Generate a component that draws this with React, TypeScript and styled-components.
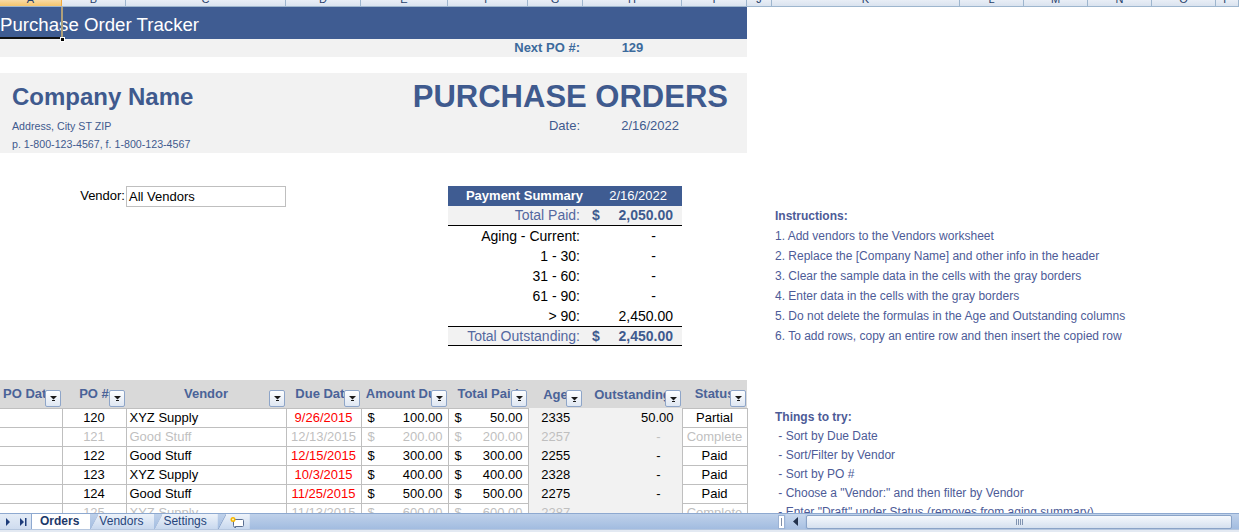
import React from "react";
import styled, { createGlobalStyle } from "styled-components";

const BLUE = "#3F5C92";
const HEADING = "#3F5A8E";
const NOTE = "#4D5B97";
const PANEL = "#F2F2F2";
const GRID = "#BFBFBF";
const MUTED = "#BFBFBF";

const COLS = [62, 64, 160, 75, 87, 80, 55, 99, 65];
const gridCols = COLS.map((c) => `${c}px`).join(" ");

const HEADER_COLS: [string, number][] = [
  ["A", 62], ["B", 64], ["C", 160], ["D", 75], ["E", 87], ["F", 80], ["G", 55], ["H", 99],
  ["I", 65], ["J", 25], ["K", 188], ["L", 64], ["M", 64], ["N", 64], ["O", 64], ["P", 64],
];

type Order = {
  po: number;
  vendor: string;
  due: string;
  amount: string;
  paid: string;
  age: number;
  out: string;
  status: string;
  muted?: boolean;
};

const orders: Order[] = [
  { po: 120, vendor: "XYZ Supply", due: "9/26/2015", amount: "100.00", paid: "50.00", age: 2335, out: "50.00", status: "Partial" },
  { po: 121, vendor: "Good Stuff", due: "12/13/2015", amount: "200.00", paid: "200.00", age: 2257, out: "-", status: "Complete", muted: true },
  { po: 122, vendor: "Good Stuff", due: "12/15/2015", amount: "300.00", paid: "300.00", age: 2255, out: "-", status: "Paid" },
  { po: 123, vendor: "XYZ Supply", due: "10/3/2015", amount: "400.00", paid: "400.00", age: 2328, out: "-", status: "Paid" },
  { po: 124, vendor: "Good Stuff", due: "11/25/2015", amount: "500.00", paid: "500.00", age: 2275, out: "-", status: "Paid" },
  { po: 125, vendor: "XYZ Supply", due: "11/13/2015", amount: "600.00", paid: "600.00", age: 2287, out: "-", status: "Complete", muted: true },
];

const aging: [string, string][] = [
  ["Aging - Current:", "-"],
  ["1 - 30:", "-"],
  ["31 - 60:", "-"],
  ["61 - 90:", "-"],
  ["> 90:", "2,450.00"],
];

const instructions = [
  "1. Add vendors to the Vendors worksheet",
  "2. Replace the [Company Name] and other info in the header",
  "3. Clear the sample data in the cells with the gray borders",
  "4. Enter data in the cells with the gray borders",
  "5. Do not delete the formulas in the Age and Outstanding columns",
  "6. To add rows, copy an entire row and then insert the copied row",
];

const thingsToTry = [
  " - Sort by Due Date",
  " - Sort/Filter by Vendor",
  " - Sort by PO #",
  ' - Choose a "Vendor:" and then filter by Vendor',
  ' - Enter "Draft" under Status (removes from aging summary)',
];

const tableHeads = ["PO Date", "PO #", "Vendor", "Due Date", "Amount Due", "Total Paid", "Age", "Outstanding", "Status"];

const GlobalStyle = createGlobalStyle`
  * { box-sizing: border-box; }
  html, body { margin: 0; padding: 0; overflow: hidden; background: #fff; }
  body { font-family: "Liberation Sans", Arial, sans-serif; color: #000; }
`;

const Window = styled.div`
  width: 1239px;
  height: 532px;
  display: flex;
  flex-direction: column;
  overflow: hidden;
`;

const ColumnHeaders = styled.div`
  display: flex;
  height: 7px;
  flex: none;
  border-bottom: 1px solid #9eb6ce;
  background: linear-gradient(#e9eef6, #dae3ef);
`;

const ColHead = styled.div<{ $w: number; $active?: boolean }>`
  width: ${(p) => p.$w}px;
  flex: none;
  overflow: hidden;
  border-right: 1px solid ${(p) => (p.$active ? "#f2a93b" : "#9eb6ce")};
  background: ${(p) => (p.$active ? "linear-gradient(#f9dba5, #f6c56c)" : "transparent")};
  text-align: center;
  font-size: 11px;
  color: #27416b;

  span {
    display: block;
    margin-top: -8px;
    line-height: 14px;
  }

  &:last-child {
    flex: 1;
  }
`;

const Sheet = styled.div`
  flex: 1;
  display: flex;
  overflow: hidden;
`;

const LeftPane = styled.div`
  width: 747px;
  flex: none;
  display: flex;
  flex-direction: column;
`;

const RightPane = styled.div`
  flex: 1;
  display: flex;
  flex-direction: column;
  padding-left: 28px;
`;

const Spacer = styled.div<{ $h: number }>`
  height: ${(p) => p.$h}px;
  flex: none;
`;

const TitleBar = styled.div`
  position: relative;
  height: 32px;
  flex: none;
  background: ${BLUE};
  color: #fff;
  font-size: 18.67px;
  line-height: 29px;
  padding-top: 3px;
  white-space: nowrap;
`;

const Selection = styled.div`
  position: absolute;
  left: 0;
  top: 0;
  width: 63px;
  height: 32px;
  border-right: 2px solid #b0a07a;
  border-bottom: 2px solid #111;
  pointer-events: none;
`;

const FillHandle = styled.div`
  position: absolute;
  left: 60px;
  top: 30px;
  width: 5px;
  height: 5px;
  background: #000;
  border: 1px solid #fff;
`;

const NextPoRow = styled.div`
  height: 18px;
  flex: none;
  display: grid;
  grid-template-columns: ${gridCols};
  background: ${PANEL};
  font-size: 13px;
  font-weight: bold;
  line-height: 18px;
  color: #3c6a9c;
`;

const NextPoLabel = styled.div`
  grid-column: 5 / 8;
  text-align: right;
  padding-right: 3px;
`;

const NextPoValue = styled.div`
  grid-column: 8;
  text-align: center;
`;

const CompanyBlock = styled.div`
  height: 80px;
  flex: none;
  display: grid;
  grid-template-columns: ${gridCols};
  grid-template-rows: 44px 18px 18px;
  background: ${PANEL};
  color: ${HEADING};
`;

const CompanyName = styled.div`
  grid-column: 1 / 5;
  grid-row: 1;
  padding: 10px 0 0 12px;
  font-size: 24px;
  line-height: 28px;
  font-weight: bold;
  white-space: nowrap;
`;

const DocTitle = styled.div`
  grid-column: 5 / 10;
  grid-row: 1;
  padding: 6px 19px 0 0;
  text-align: right;
  font-size: 31px;
  line-height: 36px;
  font-weight: bold;
  white-space: nowrap;
`;

const SmallLine = styled.div<{ $row: number }>`
  grid-column: 1 / 5;
  grid-row: ${(p) => p.$row};
  padding-left: 12px;
  font-size: 10.67px;
  line-height: 18px;
  white-space: nowrap;
`;

const DateLabel = styled.div`
  grid-column: 5 / 8;
  grid-row: 2;
  text-align: right;
  padding-right: 3px;
  font-size: 13px;
  line-height: 18px;
`;

const DateValue = styled.div`
  grid-column: 8;
  grid-row: 2;
  text-align: right;
  padding-right: 3px;
  font-size: 13px;
  line-height: 18px;
`;

const SummaryArea = styled.div`
  flex: none;
  display: grid;
  grid-template-columns: ${gridCols};
  grid-template-rows: repeat(8, 20px);
`;

const VendorLabel = styled.div`
  grid-column: 2;
  grid-row: 1;
  text-align: right;
  padding-right: 1px;
  font-size: 13px;
  line-height: 20px;
`;

const VendorBox = styled.div`
  grid-column: 3;
  grid-row: 1;
  height: 21px;
  border: 1px solid ${GRID};
  padding-left: 2px;
  font-size: 13px;
  line-height: 19px;
`;

const PaymentSummary = styled.div`
  grid-column: 6 / 9;
  grid-row: 1 / 9;
  display: flex;
  flex-direction: column;
`;

type RowKind = "head" | "total" | "plain" | "last";

const SummaryRow = styled.div<{ $kind: RowKind }>`
  height: 20px;
  display: grid;
  grid-template-columns: 135px 99px;
  font-size: ${(p) => (p.$kind === "head" ? "13px" : "14px")};
  line-height: ${(p) => (p.$kind === "last" ? "18px" : p.$kind === "total" ? "19px" : "20px")};
  background: ${(p) => (p.$kind === "head" ? BLUE : p.$kind === "plain" ? "transparent" : PANEL)};
  color: ${(p) => (p.$kind === "head" ? "#fff" : p.$kind === "plain" ? "#000" : "#5468a0")};
  border-top: ${(p) => (p.$kind === "last" ? "1px solid #000" : "none")};
  border-bottom: ${(p) => (p.$kind === "total" || p.$kind === "last" ? "1px solid #000" : "none")};
`;

const SummaryLabel = styled.div<{ $bold?: boolean }>`
  text-align: right;
  padding-right: ${(p) => (p.$bold ? "0" : "3px")};
  font-weight: ${(p) => (p.$bold ? "bold" : "normal")};
  white-space: nowrap;
`;

const SummaryValue = styled.div<{ $bold?: boolean; $pad?: number }>`
  display: flex;
  justify-content: space-between;
  padding: 0 ${(p) => p.$pad ?? 9}px 0 9px;
  font-weight: ${(p) => (p.$bold ? "bold" : "normal")};
  color: ${(p) => (p.$bold ? HEADING : "inherit")};
`;

const Dash = styled.span<{ $gap: number }>`
  margin-right: ${(p) => p.$gap}px;
`;

const Table = styled.table`
  border-collapse: collapse;
  table-layout: fixed;
  width: 747px;
  flex: none;
  font-size: 13px;
`;

const HeadCell = styled.th`
  position: relative;
  height: 28px;
  padding: 0 2px;
  background: #d9d9d9;
  color: #4a6398;
  font-size: 13px;
  font-weight: bold;
  text-align: center;
  white-space: nowrap;
  overflow: hidden;

  &:first-child {
    text-align: left;
    padding-left: 3px;
  }
`;

const FilterButton = styled.span`
  position: absolute;
  right: 1px;
  bottom: 1px;
  width: 16px;
  height: 17px;
  border: 1px solid #8ea5c8;
  border-radius: 2px;
  background: linear-gradient(#fdfeff, #dfe7f2);
  display: flex;
  align-items: center;
  justify-content: center;
`;

type Align = "left" | "center" | "right";

const Cell = styled.td<{ $align?: Align; $muted?: boolean; $red?: boolean; $shade?: "age" | "out" }>`
  height: 19px;
  padding: 0 ${(p) => (p.$align === "left" ? "3px" : "0")};
  border: 1px solid ${GRID};
  text-align: ${(p) => p.$align ?? "center"};
  white-space: nowrap;
  overflow: hidden;
  line-height: 17px;
  color: ${(p) => (p.$muted ? MUTED : p.$red ? "#ff0000" : "#000")};
  background: ${(p) => (p.$shade ? PANEL : "#fff")};
  border-top-style: ${(p) => (p.$shade ? "none" : "solid")};
  border-bottom-style: ${(p) => (p.$shade ? "none" : "solid")};
  border-right-style: ${(p) => (p.$shade === "age" ? "none" : "solid")};
  border-left-style: ${(p) => (p.$shade === "out" ? "none" : "solid")};

  &:first-child {
    border-left-style: none;
  }
`;

const Money = styled.div`
  display: flex;
  justify-content: space-between;
  padding: 0 5px 0 6px;
`;

const OutValue = styled.div`
  text-align: right;
  padding-right: 8px;
`;

const NoteHeading = styled.div<{ $h: number }>`
  height: ${(p) => p.$h}px;
  line-height: ${(p) => p.$h}px;
  font-size: 12px;
  font-weight: bold;
  color: ${NOTE};
  flex: none;
`;

const NoteLine = styled.div<{ $h: number }>`
  height: ${(p) => p.$h}px;
  line-height: ${(p) => p.$h}px;
  font-size: 12px;
  color: ${NOTE};
  white-space: pre;
  flex: none;
`;

const TabBar = styled.div`
  height: 16px;
  flex: none;
  display: flex;
  background: linear-gradient(#bfd1ea, #a2bce0);
  border-top: 1px solid #8ea9d0;
`;

const NavButtons = styled.div`
  width: 32px;
  flex: none;
  display: flex;
  align-items: center;
  gap: 8px;
  padding-left: 5px;
  background: linear-gradient(#e4ecf7, #cfdcef);
  border-right: 1px solid #8ea9d0;
`;

const Tabs = styled.div`
  display: flex;
`;

const Tab = styled.div<{ $active?: boolean }>`
  position: relative;
  height: 15px;
  padding: 0 11px 0 ${(p) => (p.$active ? "8px" : "9px")};
  font-size: 12px;
  line-height: 15px;
  font-weight: ${(p) => (p.$active ? "bold" : "normal")};
  color: ${(p) => (p.$active ? "#1d3869" : "#27457c")};
  background: ${(p) => (p.$active ? "#fff" : "linear-gradient(#eef3fa, #c8d8ee)")};
  clip-path: ${(p) => (p.$active ? "none" : "polygon(8px 0, 100% 0, 100% 100%, 0 100%)")};
  white-space: nowrap;

  &::before {
    content: "";
    position: absolute;
    left: 0;
    top: 0;
    width: 8px;
    height: 15px;
    display: ${(p) => (p.$active ? "none" : "block")};
    background: linear-gradient(to bottom right, transparent calc(50% - 1px), #7d99c4 50%, transparent calc(50% + 1px));
  }
`;

const NewSheetTab = styled(Tab)`
  width: 32px;
  padding: 0 0 0 6px;
  display: flex;
  align-items: center;
  justify-content: center;
`;

const BarFill = styled.div`
  flex: 1;
`;

const Scrollbar = styled.div`
  width: 461px;
  flex: none;
  display: flex;
  align-items: center;
  gap: 1px;
`;

const Splitter = styled.div`
  width: 7px;
  height: 14px;
  background: #fff;
  border: 1px solid #9bb2d4;
  display: flex;
  align-items: center;
  justify-content: center;

  &::after {
    content: "";
    width: 1px;
    height: 8px;
    background: #7f8ea8;
  }
`;

const ArrowButton = styled.div`
  width: 19px;
  height: 15px;
  display: flex;
  align-items: center;
  justify-content: center;
  background: linear-gradient(#c8d8ee, #a9c1e2);
`;

const Thumb = styled.div`
  width: 426px;
  height: 14px;
  border: 1px solid #8aa3c7;
  border-radius: 2px;
  background: linear-gradient(#f6f9fd, #d5e0ef);
  display: flex;
  align-items: center;
  justify-content: center;
  gap: 1px;

  span {
    width: 1px;
    height: 6px;
    background: #8193b0;
  }
`;

const StatusStrip = styled.div`
  height: 3px;
  flex: none;
  background: #e3e9f2;
  border-top: 1px solid #b6c7df;
`;

const DownArrow = () => (
  <svg width="7" height="6" viewBox="0 0 7 6">
    <path d="M0 1h7L3.5 4.5z" fill="#1a1a1a" />
    <rect x="2" y="5" width="3" height="1" fill="#1a1a1a" />
  </svg>
);

const NavNext = () => (
  <svg width="6" height="8" viewBox="0 0 6 8">
    <path d="M1 0l4 4-4 4z" fill="#1e3c7a" />
  </svg>
);

const NavLast = () => (
  <svg width="8" height="8" viewBox="0 0 8 8">
    <path d="M1 0l4 4-4 4z" fill="#1e3c7a" />
    <rect x="6" y="0" width="1.5" height="8" fill="#1e3c7a" />
  </svg>
);

const NewSheetIcon = () => (
  <svg width="16" height="12" viewBox="0 0 16 12">
    <rect x="4.5" y="3.5" width="10" height="7" rx="1" fill="#fff" stroke="#5a6f92" />
    <path d="M4.5 10.5l2 1.5v-1.5" fill="#fff" stroke="#5a6f92" />
    <circle cx="4" cy="3.5" r="2.5" fill="#f5b400" />
    <circle cx="4" cy="3.5" r="1.1" fill="#fff3b0" />
  </svg>
);

const LeftArrow = () => (
  <svg width="6" height="9" viewBox="0 0 6 9">
    <path d="M5 0v9L0 4.5z" fill="#23324d" />
  </svg>
);

export default function App() {
  return (
    <>
      <GlobalStyle />
      <Window>
        <ColumnHeaders>
          {HEADER_COLS.map(([letter, w]) => (
            <ColHead key={letter} $w={w} $active={letter === "A"}>
              <span>{letter}</span>
            </ColHead>
          ))}
        </ColumnHeaders>

        <Sheet>
          <LeftPane>
            <TitleBar>
              Purchase Order Tracker
              <Selection />
              <FillHandle />
            </TitleBar>

            <NextPoRow>
              <NextPoLabel>Next PO #:</NextPoLabel>
              <NextPoValue>129</NextPoValue>
            </NextPoRow>

            <Spacer $h={16} />

            <CompanyBlock>
              <CompanyName>Company Name</CompanyName>
              <DocTitle>PURCHASE ORDERS</DocTitle>
              <SmallLine $row={2}>Address, City ST ZIP</SmallLine>
              <SmallLine $row={3}>p. 1-800-123-4567, f. 1-800-123-4567</SmallLine>
              <DateLabel>Date:</DateLabel>
              <DateValue>2/16/2022</DateValue>
            </CompanyBlock>

            <Spacer $h={33} />

            <SummaryArea>
              <VendorLabel>Vendor:</VendorLabel>
              <VendorBox>All Vendors</VendorBox>
              <PaymentSummary>
                <SummaryRow $kind="head">
                  <SummaryLabel $bold>Payment Summary</SummaryLabel>
                  <SummaryValue $pad={15}>
                    <span />
                    <span>2/16/2022</span>
                  </SummaryValue>
                </SummaryRow>
                <SummaryRow $kind="total">
                  <SummaryLabel>Total Paid:</SummaryLabel>
                  <SummaryValue $bold>
                    <span>$</span>
                    <span>2,050.00</span>
                  </SummaryValue>
                </SummaryRow>
                {aging.map(([label, value]) => (
                  <SummaryRow key={label} $kind="plain">
                    <SummaryLabel>{label}</SummaryLabel>
                    <SummaryValue>
                      <span />
                      {value === "-" ? <Dash $gap={17}>-</Dash> : <span>{value}</span>}
                    </SummaryValue>
                  </SummaryRow>
                ))}
                <SummaryRow $kind="last">
                  <SummaryLabel>Total Outstanding:</SummaryLabel>
                  <SummaryValue $bold>
                    <span>$</span>
                    <span>2,450.00</span>
                  </SummaryValue>
                </SummaryRow>
              </PaymentSummary>
            </SummaryArea>

            <Spacer $h={34} />

            <Table>
              <colgroup>
                {COLS.map((w, i) => (
                  <col key={i} style={{ width: w }} />
                ))}
              </colgroup>
              <thead>
                <tr>
                  {tableHeads.map((h) => (
                    <HeadCell key={h}>
                      {h}
                      <FilterButton>
                        <DownArrow />
                      </FilterButton>
                    </HeadCell>
                  ))}
                </tr>
              </thead>
              <tbody>
                {orders.map((o) => (
                  <tr key={o.po}>
                    <Cell />
                    <Cell $muted={o.muted}>{o.po}</Cell>
                    <Cell $align="left" $muted={o.muted}>{o.vendor}</Cell>
                    <Cell $muted={o.muted} $red>{o.due}</Cell>
                    <Cell $muted={o.muted}>
                      <Money>
                        <span>$</span>
                        <span>{o.amount}</span>
                      </Money>
                    </Cell>
                    <Cell $muted={o.muted}>
                      <Money>
                        <span>$</span>
                        <span>{o.paid}</span>
                      </Money>
                    </Cell>
                    <Cell $muted={o.muted} $shade="age">{o.age}</Cell>
                    <Cell $muted={o.muted} $shade="out">
                      <OutValue>{o.out === "-" ? <Dash $gap={13}>-</Dash> : o.out}</OutValue>
                    </Cell>
                    <Cell $muted={o.muted}>{o.status}</Cell>
                  </tr>
                ))}
              </tbody>
            </Table>
          </LeftPane>

          <RightPane>
            <Spacer $h={199} />
            <NoteHeading $h={20}>Instructions:</NoteHeading>
            {instructions.map((t) => (
              <NoteLine key={t} $h={20}>{t}</NoteLine>
            ))}
            <Spacer $h={62} />
            <NoteHeading $h={19}>Things to try:</NoteHeading>
            {thingsToTry.map((t) => (
              <NoteLine key={t} $h={19}>{t}</NoteLine>
            ))}
          </RightPane>
        </Sheet>

        <TabBar>
          <NavButtons>
            <NavNext />
            <NavLast />
          </NavButtons>
          <Tabs>
            <Tab $active>Orders</Tab>
            <Tab>Vendors</Tab>
            <Tab>Settings</Tab>
            <NewSheetTab>
              <NewSheetIcon />
            </NewSheetTab>
          </Tabs>
          <BarFill />
          <Scrollbar>
            <Splitter />
            <ArrowButton>
              <LeftArrow />
            </ArrowButton>
            <Thumb>
              <span />
              <span />
              <span />
              <span />
            </Thumb>
          </Scrollbar>
        </TabBar>
        <StatusStrip />
      </Window>
    </>
  );
}
